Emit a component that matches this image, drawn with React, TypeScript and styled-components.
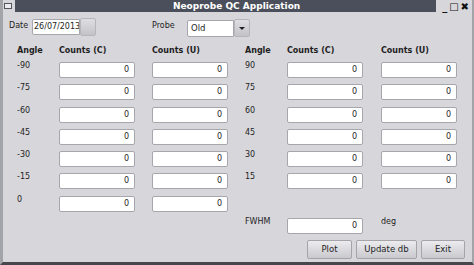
import React from "react";
import styled, { createGlobalStyle } from "styled-components";

const GlobalStyle = createGlobalStyle`
    html, body {
        margin: 0;
        padding: 0;
        background: #d7d6db;
    }
    * {
        box-sizing: border-box;
    }
`;

const Window = styled.div`
    width: 474px;
    height: 265px;
    display: flex;
    flex-direction: column;
    background: #d7d6db;
    border-left: 3px solid #a3a3aa;
    border-right: 2px solid #a3a3aa;
    border-bottom: 3px solid #46464d;
    font-family: "DejaVu Sans", sans-serif;
    color: #1e1e1e;
    overflow: hidden;
`;

const TitleBar = styled.div`
    height: 12px;
    display: flex;
    align-items: stretch;
    flex-shrink: 0;
`;

const MenuIcon = styled.div`
    width: 8px;
    height: 6px;
    margin: 3px 3px 0 1px;
    border: 1px solid #55555c;
    background: #ececf0;
`;

const Title = styled.div`
    flex: 1;
    background: #4b4f5b;
    color: #ffffff;
    font-weight: bold;
    font-size: 9px;
    line-height: 12px;
    text-align: center;
    padding-left: 22px;
`;

const Controls = styled.div`
    display: flex;
    align-items: center;
    gap: 2px;
    padding: 0 3px 0 6px;
    font-weight: bold;
    font-size: 10px;
    color: #111;
`;

const Body = styled.div`
    flex: 1;
    display: flex;
    flex-direction: column;
`;

const TopRow = styled.div`
    display: flex;
    align-items: center;
    height: 18px;
    margin-top: 6px;
    padding-left: 6px;
`;

const Label = styled.span<{ $w?: number }>`
    display: inline-block;
    width: ${(p) => (p.$w ? `${p.$w}px` : "auto")};
    font-size: 8px;
    line-height: 10px;
    margin-top: -3px;
`;

const DateInput = styled.div`
    width: 48px;
    height: 16px;
    background: #fff;
    border: 1px solid #a6a6ad;
    border-radius: 2px 0 0 2px;
    font-size: 8px;
    line-height: 14px;
    padding-left: 1px;
    white-space: nowrap;
    overflow: hidden;
`;

const SideButton = styled.div<{ $drop?: boolean }>`
    width: 16px;
    height: 18px;
    margin-top: ${(p) => (p.$drop ? "2px" : "0")};
    border: 1px solid #b5b5bb;
    border-radius: 2px;
    background: linear-gradient(#dedee2, #c2c2c8);
    display: flex;
    align-items: center;
    justify-content: center;
`;

const Spacer = styled.div<{ $w: number }>`
    width: ${(p) => p.$w}px;
`;

const Combo = styled.div`
    width: 47px;
    height: 17px;
    background: #fff;
    border: 1px solid #a6a6ad;
    border-radius: 2px 0 0 2px;
    font-size: 8.5px;
    line-height: 15px;
    padding-left: 3px;
    margin-top: 2px;
`;

const Arrow = styled.div`
    width: 0;
    height: 0;
    border-left: 3px solid transparent;
    border-right: 3px solid transparent;
    border-top: 3px solid #222;
`;

const Grid = styled.div`
    display: grid;
    grid-template-columns: 42px 93px 93px 42px 94px 76px;
    grid-template-rows: 21px repeat(8, 22.3px);
    padding-left: 14px;
`;

const Head = styled.div`
    align-self: end;
    font-size: 8px;
    font-weight: bold;
    line-height: 13px;
    white-space: nowrap;
`;

const Cell = styled.div`
    font-size: 8px;
    line-height: 10px;
    padding-top: 4px;
    white-space: nowrap;
`;

const NumBox = styled.div`
    width: 76px;
    height: 16px;
    margin-top: 5px;
    background: #fff;
    border: 1px solid #a6a6ad;
    border-radius: 2px;
    font-size: 8px;
    line-height: 14px;
    text-align: right;
    padding-right: 5px;
`;

const Footer = styled.div`
    display: flex;
    justify-content: flex-end;
    gap: 4px;
    margin-top: 5px;
    padding-right: 7px;
`;

const Button = styled.div<{ $w: number }>`
    width: ${(p) => p.$w}px;
    height: 19px;
    border: 1px solid #a4a4aa;
    border-radius: 2px;
    background: linear-gradient(#ececef, #c9c9ce);
    font-size: 8.5px;
    line-height: 17px;
    text-align: center;
`;

const leftAngles = ["-90", "-75", "-60", "-45", "-30", "-15", "0"];
const rightAngles = ["90", "75", "60", "45", "30", "15"];

export default function App() {
    const rows = [];
    for (let i = 0; i < 7; i++) {
        const r = rightAngles[i];
        rows.push(
            <React.Fragment key={i}>
                <Cell>{leftAngles[i]}</Cell>
                <div><NumBox>0</NumBox></div>
                <div><NumBox>0</NumBox></div>
                <Cell>{r ?? ""}</Cell>
                <div>{r ? <NumBox>0</NumBox> : null}</div>
                <div>{r ? <NumBox>0</NumBox> : null}</div>
            </React.Fragment>
        );
    }

    return (
        <>
            <GlobalStyle />
            <Window>
                <TitleBar>
                    <MenuIcon />
                    <Title>Neoprobe QC Application</Title>
                    <Controls>
                        <span>_</span>
                        <span>□</span>
                        <span>✖</span>
                    </Controls>
                </TitleBar>
                <Body>
                    <TopRow>
                        <Label $w={23}>Date</Label>
                        <DateInput>26/07/2013</DateInput>
                        <SideButton />
                        <Spacer $w={56} />
                        <Label $w={35}>Probe</Label>
                        <Combo>Old</Combo>
                        <SideButton $drop>
                            <Arrow />
                        </SideButton>
                    </TopRow>
                    <Grid>
                        <Head>Angle</Head>
                        <Head>Counts (C)</Head>
                        <Head>Counts (U)</Head>
                        <Head>Angle</Head>
                        <Head>Counts (C)</Head>
                        <Head>Counts (U)</Head>
                        {rows}
                        <div />
                        <div />
                        <div />
                        <Cell>FWHM</Cell>
                        <div><NumBox>0</NumBox></div>
                        <Cell>deg</Cell>
                    </Grid>
                    <Footer>
                        <Button $w={45}>Plot</Button>
                        <Button $w={61}>Update db</Button>
                        <Button $w={44}>Exit</Button>
                    </Footer>
                </Body>
            </Window>
        </>
    );
}
